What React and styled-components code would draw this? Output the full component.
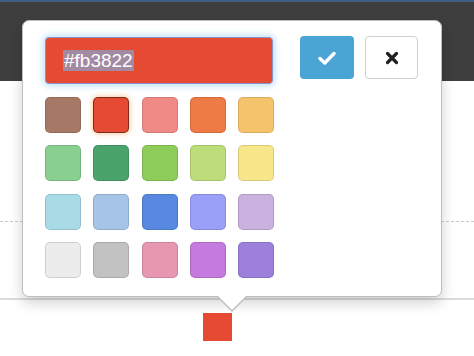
import styled, { createGlobalStyle } from "styled-components";

const swatches = [
  ["#a57966", "#e54a33", "#f08a87", "#ee7a45", "#f5c36b"],
  ["#88cf90", "#4aa36a", "#8fcd5b", "#bddc7a", "#f8e68b"],
  ["#a9dbe6", "#a6c4e6", "#5789e0", "#9a9ff7", "#cbb1df"],
  ["#ececec", "#c2c2c2", "#e797b0", "#c47ade", "#9d7fdc"],
];

const SELECTED = "#e54a33";

function App() {
  return (
    <>
      <GlobalStyle />
      <Page>
        <Header />
        <Body>
          <DashedLine />
          <SolidLine />
          <Preview />
        </Body>

        {/* color picker popover */}
        <Popover>
          <TopRow>
            <HexInput>
              <Selected>#fb3822</Selected>
            </HexInput>
            <Actions>
              <ConfirmButton>
                <svg width="18" height="14" viewBox="0 0 18 14">
                  <path
                    d="M2 7.5 L6.8 12 L16 2.5"
                    fill="none"
                    stroke="#fff"
                    strokeWidth="3.4"
                    strokeLinecap="round"
                    strokeLinejoin="round"
                  />
                </svg>
              </ConfirmButton>
              <CancelButton>
                <svg width="14" height="14" viewBox="0 0 14 14">
                  <path
                    d="M2.5 2.5 L11.5 11.5 M11.5 2.5 L2.5 11.5"
                    stroke="#222"
                    strokeWidth="3.2"
                    strokeLinecap="round"
                  />
                </svg>
              </CancelButton>
            </Actions>
          </TopRow>
          <Grid>
            {swatches.flat().map((c, i) => (
              <Swatch key={i} $color={c} $active={c === SELECTED} />
            ))}
          </Grid>
        </Popover>
      </Page>
    </>
  );
}

const GlobalStyle = createGlobalStyle`
  body {
    margin: 0;
    background: #fff;
    font-family: "Liberation Sans", Arial, sans-serif;
  }
`;

const Page = styled.div`
  position: relative;
  width: 474px;
  height: 356px;
  overflow: hidden;
`;

const Header = styled.div`
  height: 79px;
  background: #3e3e3e;
  border-top: 2px solid #3f5e80;
`;

const Body = styled.div`
  display: flex;
  flex-direction: column;
`;

const DashedLine = styled.div`
  margin-top: 140px;
  border-top: 1px dashed #c8c8c8;
`;

const SolidLine = styled.div`
  margin-top: 76px;
  border-top: 2px solid #dcdcdc;
`;

const Preview = styled.div`
  margin: 13px 0 0 203px;
  width: 29px;
  height: 28px;
  background: #e64a33;
`;

const Popover = styled.div`
  position: absolute;
  left: 22px;
  top: 20px;
  width: 420px;
  height: 277px;
  box-sizing: border-box;
  padding: 15px 23px 0 22px;
  background: #fff;
  border: 1px solid #bdbdbd;
  border-radius: 7px;
  box-shadow: 0 6px 14px rgba(0, 0, 0, 0.18);

  &::before,
  &::after {
    content: "";
    position: absolute;
    left: 193px;
    border-style: solid;
    border-color: transparent;
  }
  &::before {
    bottom: -16px;
    border-width: 16px 16px 0 16px;
    border-top-color: #bdbdbd;
  }
  &::after {
    left: 194px;
    bottom: -14px;
    border-width: 15px 15px 0 15px;
    border-top-color: #fff;
  }
`;

const TopRow = styled.div`
  display: flex;
  align-items: flex-start;
  justify-content: space-between;
`;

const HexInput = styled.div`
  width: 228px;
  height: 47px;
  box-sizing: border-box;
  display: flex;
  align-items: center;
  padding-left: 17px;
  background: #e54a33;
  border: 1px solid #8b94c8;
  border-radius: 4px;
  box-shadow: 0 0 6px 2px rgba(135, 200, 245, 0.55);
  margin-top: 1px;
`;

const Selected = styled.span`
  font-size: 19px;
  color: #fff;
  background: #a38aa3;
  line-height: 21px;
  padding: 0 1px;
`;

const Actions = styled.div`
  display: flex;
  gap: 11px;
`;

const ConfirmButton = styled.div`
  width: 54px;
  height: 43px;
  border-radius: 4px;
  background: #4aa5d5;
  display: flex;
  align-items: center;
  justify-content: center;
`;

const CancelButton = styled.div`
  width: 53px;
  height: 43px;
  box-sizing: border-box;
  border-radius: 4px;
  border: 1px solid #cfcfcf;
  background: #fff;
  display: flex;
  align-items: center;
  justify-content: center;
`;

const Grid = styled.div`
  margin-top: 13px;
  display: grid;
  grid-template-columns: repeat(5, 36px);
  grid-auto-rows: 36px;
  column-gap: 12.3px;
  row-gap: 12.3px;
`;

const Swatch = styled.div`
  box-sizing: border-box;
  border-radius: 5px;
  background: ${(p) => p.$color};
  border: 1px solid
    ${(p) => (p.$active ? "rgba(80, 30, 20, 0.7)" : "rgba(0, 0, 0, 0.12)")};
  box-shadow: ${(p) =>
    p.$active ? "0 0 5px 1px rgba(245, 160, 80, 0.55)" : "none"};
`;

export default App;
